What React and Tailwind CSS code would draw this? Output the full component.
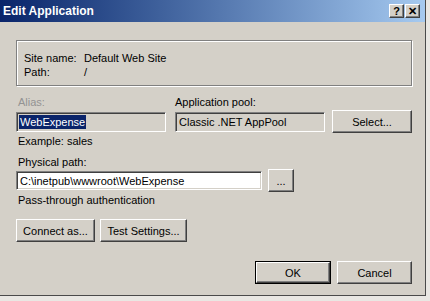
const font = { fontFamily: '"Liberation Sans", Arial, sans-serif' };

const sunken =
  "border border-t-[#808080] border-l-[#808080] border-b-white border-r-white shadow-[inset_1px_1px_0_#404040,inset_-1px_-1px_0_#d4d0c8]";
const raised =
  "border border-t-white border-l-white border-b-[#404040] border-r-[#404040] shadow-[inset_-1px_-1px_0_#808080] bg-[#d4d0c8]";

function Button({ children, className = "", isDefault = false }) {
  if (isDefault) {
    return (
      <div className={`border border-black ${className}`}>
        <div className={`${raised} h-full flex items-center justify-center text-black`}>{children}</div>
      </div>
    );
  }
  return <div className={`${raised} flex items-center justify-center text-black ${className}`}>{children}</div>;
}

function CaptionButton({ children }) {
  return (
    <div className={`${raised} w-[15px] h-[14px] flex items-center justify-center text-[11px] font-bold leading-none text-black`}>
      {children}
    </div>
  );
}

export default function App() {
  return (
    <div className="w-[430px] h-[301px] bg-[#e9e7e3] overflow-hidden" style={font}>
      <div className="w-[426px] h-[296px] bg-[#d4d0c8] border-r border-b border-[#4a4a4a] flex flex-col text-[11px] leading-[14px] text-black">
        <div className="h-[22px] shrink-0 flex items-center justify-between pl-[3px] pr-[5px] bg-gradient-to-r from-[#0a246a] to-[#a6caf0]">
          <span className="text-white font-bold text-[12px]">Edit Application</span>
          <div className="flex gap-[1px]">
            <CaptionButton>?</CaptionButton>
            <CaptionButton>✕</CaptionButton>
          </div>
        </div>

        <div className="pl-4 pr-[13px] pt-[18px] flex flex-col">
          <div className="border border-[#808080] shadow-[1px_1px_0_#fff,inset_1px_1px_0_#fff] pt-[10px] pb-[6px] pl-[7px]">
            <div className="flex">
              <span className="w-[60px]">Site name:</span>
              <span>Default Web Site</span>
            </div>
            <div className="flex">
              <span className="w-[60px]">Path:</span>
              <span>/</span>
            </div>
          </div>

          <div className="mt-[9px] flex gap-[9px]">
            <span className="w-[150px] pl-[2px] text-[#939393]">Alias:</span>
            <span>Application pool:</span>
          </div>
          <div className="mt-[1px] flex items-center h-[23px]">
            <div className={`${sunken} w-[150px] h-[20px] flex items-center pl-[2px]`}>
              <span className="bg-[#0a246a] text-white px-[1px]">WebExpense</span>
            </div>
            <div className={`${sunken} ml-[9px] w-[150px] h-[20px] flex items-center pl-[3px]`}>
              Classic .NET AppPool
            </div>
            <Button className="ml-[7px] w-[80px] h-[23px]">Select...</Button>
          </div>

          <div className="mt-[1px] pl-[2px]">Example: sales</div>
          <div className="mt-[7px] pl-[2px]">Physical path:</div>
          <div className="flex items-center h-[23px]">
            <div className={`${sunken} w-[246px] h-[19px] bg-white flex items-center pl-[3px]`}>
              C:\inetpub\wwwroot\WebExpense
            </div>
            <Button className="ml-[6px] w-[26px] h-[23px]">...</Button>
          </div>
          <div className="mt-[1px] pl-[2px]">Pass-through authentication</div>

          <div className="mt-[12px] flex gap-[5px]">
            <Button className="w-[79px] h-[23px]">Connect as...</Button>
            <Button className="w-[87px] h-[23px]">Test Settings...</Button>
          </div>

          <div className="mt-[19px] flex justify-end gap-[6px]">
            <Button isDefault className="w-[76px] h-[23px]">OK</Button>
            <Button className="w-[75px] h-[23px]">Cancel</Button>
          </div>
        </div>
      </div>
    </div>
  );
}
